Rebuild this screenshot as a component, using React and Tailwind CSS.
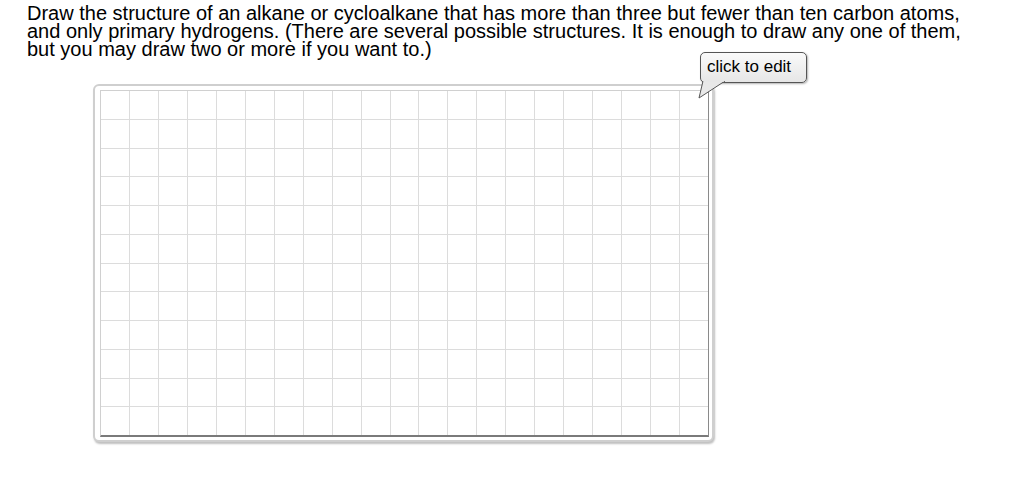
import React from 'react';

const COLS = 21;
const ROWS = 12;

function Grid() {
  const cells = [];
  for (let i = 0; i < COLS * ROWS; i++) {
    cells.push(<div key={i} className="bg-white" />);
  }
  return (
    <div className="grid h-[344px] w-[607px] grid-cols-[repeat(21,1fr)] grid-rows-[repeat(12,1fr)] gap-[1px] bg-[#dcdcdc]">
      {cells}
    </div>
  );
}

export default function App() {
  return (
    <div className="min-h-[498px] bg-white font-['Liberation_Sans',Arial,sans-serif] text-black">
      <div className="h-[58px] pl-[27px] pt-[4px] text-[20px] leading-[18px]">
        <p>
          Draw the structure of an alkane or cycloalkane that has more than three but fewer than ten carbon atoms,
          <br />
          and only primary hydrogens. (There are several possible structures. It is enough to draw any one of them,
          <br />
          but you may draw two or more if you want to.)
        </p>
      </div>

      <div className="relative ml-[93px] mt-[26px] w-[621px]">
        <div className="h-[358px] w-[621px] rounded-[6px] border-2 border-[#cfcfcf] bg-white pl-[5px] pt-[4px] shadow-[1px_2px_2px_rgba(0,0,0,0.25)]">
          <div className="w-[609px] border-b-2 border-l border-r-2 border-t border-b-[#7a7a7a] border-l-[#d0d0d0] border-r-[#8a8a8a] border-t-[#d0d0d0]">
            <Grid />
          </div>
        </div>

        <div className="absolute left-[607px] top-[-32px]">
          <div className="relative">
            <div className="h-[31px] w-[107px] rounded-[5px] border border-[#555] bg-gradient-to-b from-[#fafafa] to-[#e6e6e6] pl-[6px] pt-[3px] text-[17px] leading-[22px] shadow-[1px_1px_2px_rgba(0,0,0,0.3)] whitespace-nowrap">
              click to edit
            </div>
            <svg className="absolute left-[-2px] top-[29px]" width="30" height="20" viewBox="0 0 30 20">
              <path d="M5 0 L1 17 L27 0" fill="#e8e8e8" stroke="#555" strokeWidth="1" />
              <path d="M5.5 -0.5 L26 -0.5" stroke="#e7e7e7" strokeWidth="2.5" />
            </svg>
          </div>
        </div>
      </div>
    </div>
  );
}
